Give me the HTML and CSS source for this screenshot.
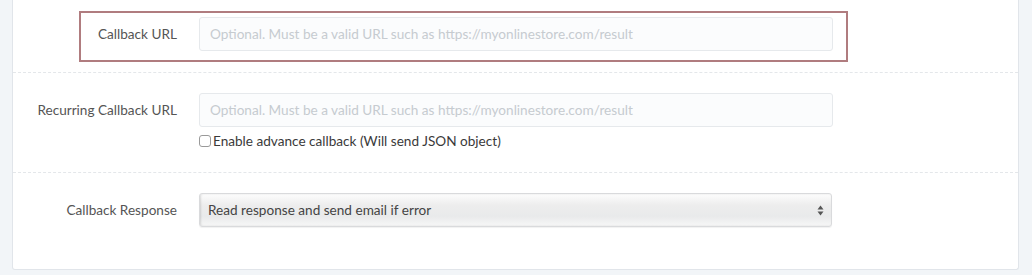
FILE: index.html
```html
<!DOCTYPE html>
<html lang="en">
<head>
  <meta charset="UTF-8">
  <title>Callback settings</title>
  <link rel="stylesheet" href="styles.css">
</head>
<body>
  <div class="panel">
    <div class="form-row first">
      <div class="highlight">
        <label class="label short" for="cb">Callback URL</label>
        <input id="cb" class="input" type="text" placeholder="Optional. Must be a valid URL such as https://myonlinestore.com/result">
      </div>
    </div>

    <div class="form-row">
      <label class="label" for="rcb">Recurring Callback URL</label>
      <div class="field">
        <input id="rcb" class="input" type="text" placeholder="Optional. Must be a valid URL such as https://myonlinestore.com/result">
        <label class="check">
          <input type="checkbox">
          <span>Enable advance callback (Will send JSON object)</span>
        </label>
      </div>
    </div>

    <div class="form-row last">
      <label class="label" for="resp">Callback Response</label>
      <div class="select-wrap">
        <select id="resp" class="select">
          <option>Read response and send email if error</option>
        </select>
        <svg class="select-arrows" width="7" height="11" viewBox="0 0 7 11">
          <path d="M3.5 0.5 L6.5 4.5 L0.5 4.5 Z" fill="#555"/>
          <path d="M3.5 10.5 L6.5 6.5 L0.5 6.5 Z" fill="#555"/>
        </svg>
      </div>
    </div>
  </div>
</body>
</html>
```

FILE: styles.css
```css
* {
  box-sizing: border-box;
  margin: 0;
  padding: 0;
}

body {
  background: #f2f5f8;
  font-family: Lato, "Liberation Sans", sans-serif;
  font-size: 13.6px;
  color: #555;
  height: 275px;
  overflow: hidden;
}

.panel {
  margin-left: 12px;
  width: 1007px;
  height: 270px;
  background: #fff;
  border: 1px solid #e1e5ea;
  border-top: none;
  border-radius: 0 0 3px 3px;
}

.form-row {
  display: flex;
  align-items: flex-start;
  padding: 20px 0 0;
  height: 100px;
  border-bottom: 1px dashed #e4e7ea;
}

.form-row.first {
  padding-top: 11px;
  height: 73px;
}

.form-row.last {
  height: 97px;
  border-bottom: none;
}

.highlight {
  display: flex;
  align-items: center;
  margin-left: 66px;
  width: 769px;
  height: 51px;
  padding: 3px 0 8px;
  border: 2px solid #b07c7f;
}

.label {
  width: 164px;
  flex: none;
  margin-right: 22px;
  height: 34px;
  line-height: 34px;
  text-align: right;
  color: #555;
}

.label.short {
  width: 96px;
}

.input {
  width: 634px;
  height: 34px;
  padding: 0 10px;
  border: 1px solid #e6e9ec;
  border-radius: 3px;
  background: #fbfcfd;
  font-family: inherit;
  font-size: 13.6px;
  color: #555;
  outline: none;
}

.input::placeholder {
  color: #c6cbd0;
}

.field {
  display: flex;
  flex-direction: column;
}

.check {
  display: flex;
  align-items: center;
  gap: 2px;
  margin-top: 5px;
  color: #3a3a3a;
  height: 18px;
}

.check input {
  appearance: none;
  width: 12px;
  height: 12px;
  border: 1px solid #9a9a9a;
  border-radius: 3px;
  background: #fff;
}

.select-wrap {
  position: relative;
  width: 633px;
}

.select {
  appearance: none;
  width: 100%;
  height: 34px;
  padding: 0 8px;
  border: 1px solid #d9dadc;
  border-radius: 3px;
  background: linear-gradient(to bottom, #fdfdfd 0%, #ededed 35%, #e9eaeb 70%, #f7f7f7 100%);
  box-shadow: inset 1px 0 2px rgba(0, 0, 0, 0.12), 0 1px 1px rgba(0, 0, 0, 0.06);
  font-family: inherit;
  font-size: 13.6px;
  color: #444;
}

.select-arrows {
  position: absolute;
  right: 8px;
  top: 12px;
}
```
